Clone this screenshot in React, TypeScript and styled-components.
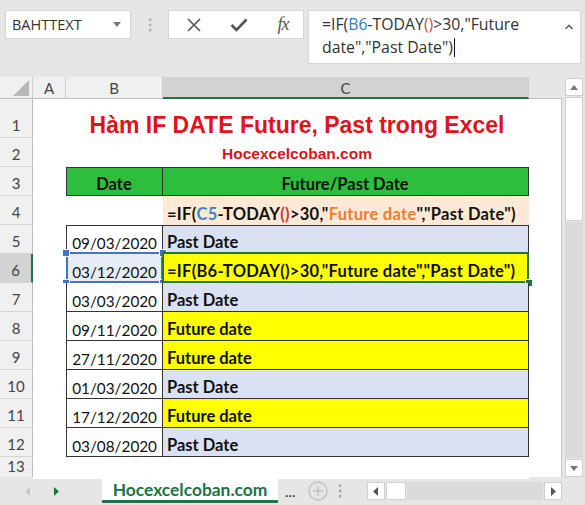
import React from 'react';
import styled, { createGlobalStyle } from 'styled-components';

const Global = createGlobalStyle`
  html, body { margin: 0; padding: 0; }
  body {
    background: #e6e6e6;
    width: 585px;
    height: 505px;
    overflow: hidden;
    font-family: "Lato", "Liberation Sans", sans-serif;
  }
`;

const Window = styled.div`
  width: 585px;
  height: 505px;
  display: flex;
  flex-direction: column;
  background: #e6e6e6;
  overflow: hidden;
`;

/* ---------- formula bar ---------- */
const FormulaArea = styled.div`
  height: 77px;
  box-sizing: border-box;
  padding: 10px 0 0 5px;
  display: flex;
  align-items: flex-start;
`;

const NameBox = styled.div`
  width: 126px;
  height: 29px;
  box-sizing: border-box;
  background: #fff;
  border: 1px solid #d6d6d6;
  display: flex;
  align-items: center;
  justify-content: space-between;
  padding: 0 9px 0 6px;
  font-family: "Open Sans", sans-serif;
  font-size: 14.5px;
  color: #333;
`;

const Grip = styled.div`
  width: 37px;
  height: 29px;
  display: flex;
  align-items: center;
  justify-content: center;
`;

const IconsBox = styled.div`
  width: 136px;
  height: 29px;
  box-sizing: border-box;
  background: #fff;
  border: 1px solid #d6d6d6;
  display: grid;
  grid-template-columns: 46px 44px 44px;
  align-items: center;
  justify-items: center;
  padding-left: 2px;
  margin-right: 4px;
`;

const Fx = styled.span`
  font-family: "Liberation Serif", serif;
  font-style: italic;
  font-size: 18px;
  color: #555;
  letter-spacing: -1px;
`;

const FormulaBox = styled.div`
  width: 273px;
  height: 54px;
  box-sizing: border-box;
  background: #fff;
  border: 1px solid #d6d6d6;
  display: flex;
  justify-content: space-between;
  padding: 2px 6px 0 13px;
  font-family: "Open Sans", sans-serif;
  font-size: 15.8px;
  line-height: 23px;
  color: #333;
`;

const FormulaText = styled.div`
  width: 240px;
  display: flex;
  flex-direction: column;
`;

const FormulaLine = styled.div`
  white-space: nowrap;
`;

const Caret = styled.span`
  display: inline-block;
  width: 1px;
  height: 19px;
  background: #111;
  vertical-align: -4px;
  margin-left: 1px;
`;

const Ref = styled.span<{ $c: string }>`
  color: ${p => p.$c};
`;

/* ---------- sheet ---------- */
const Main = styled.div`
  display: flex;
  height: 400px;
`;

const Sheet = styled.div`
  width: 562px;
  display: flex;
  flex-direction: column;
  background: #fff;
`;

const Row = styled.div<{ $h: number }>`
  display: grid;
  grid-template-columns: 33px 33px 97px 366px 33px;
  height: ${p => p.$h}px;
`;

const ColHead = styled.div<{ $sel?: boolean }>`
  box-sizing: border-box;
  background: ${p => (p.$sel ? '#d3d3d3' : '#f0f0f0')};
  border-right: 1px solid #cdcdcd;
  border-bottom: ${p => (p.$sel ? '2px solid #217346' : '1px solid #bdbdbd')};
  display: flex;
  align-items: center;
  justify-content: center;
  font-size: 15px;
  color: #444;
  padding-top: 1px;
`;

const Corner = styled.div`
  box-sizing: border-box;
  background: #f0f0f0;
  border-right: 1px solid #cdcdcd;
  border-bottom: 1px solid #bdbdbd;
  display: flex;
  align-items: flex-end;
  justify-content: flex-end;
  padding: 0 3px 2px 0;
`;

const EmptyHead = styled.div`
  background: #e6e6e6;
  border-bottom: 1px solid #bdbdbd;
`;

const RowHead = styled.div<{ $sel?: boolean }>`
  box-sizing: border-box;
  background: ${p => (p.$sel ? '#d3d3d3' : '#f0f0f0')};
  border-bottom: 1px solid #d4d4d4;
  border-right: ${p => (p.$sel ? '2px solid #217346' : '1px solid #bdbdbd')};
  display: flex;
  align-items: flex-end;
  justify-content: center;
  padding-bottom: 3px;
  font-size: 15px;
  color: #444;
`;

type CellProps = {
  $bg?: string;
  $boxed?: boolean;
  $top?: boolean;
  $left?: boolean;
  $align?: 'flex-start' | 'flex-end' | 'center';
  $bold?: boolean;
  $formula?: boolean;
  $span?: number;
};

const Cell = styled.div<CellProps>`
  position: relative;
  box-sizing: border-box;
  grid-column: span ${p => p.$span ?? 1};
  background: ${p => p.$bg ?? '#fff'};
  ${p => (p.$boxed ? 'border-right: 1px solid #333; border-bottom: 1px solid #333;' : '')}
  ${p => (p.$top ? 'border-top: 1px solid #333;' : '')}
  ${p => (p.$left ? 'border-left: 1px solid #333;' : '')}
  display: flex;
  align-items: flex-end;
  justify-content: ${p => p.$align ?? 'flex-start'};
  padding: 0 5px 1px 4px;
  font-size: ${p => (p.$bold ? '16.5px' : '15.3px')};
  font-weight: ${p => (p.$bold ? 700 : 400)};
  letter-spacing: ${p => (p.$formula ? '0.28px' : '0')};
  color: #111;
  white-space: nowrap;
`;

const EndCell = styled.div`
  background: #fff;
  border-right: 1px solid #c6c6c6;
`;

const Title = styled.div`
  font-family: "Liberation Sans", sans-serif;
  font-weight: 700;
  font-size: 23px;
  line-height: 1;
  color: #e0121c;
`;

const SubTitle = styled.div`
  font-family: "Liberation Sans", sans-serif;
  font-weight: 700;
  font-size: 15.5px;
  color: #d7141d;
  padding-bottom: 3px;
`;

const SelFrame = styled.div<{ $c: string }>`
  position: absolute;
  left: -1px;
  top: -2px;
  right: -1px;
  bottom: -1px;
  border: 2px solid ${p => p.$c};
  pointer-events: none;
`;

const Handle = styled.div<{ $c: string; $x: 'l' | 'r'; $y: 't' | 'b' }>`
  position: absolute;
  width: 6px;
  height: 6px;
  background: ${p => p.$c};
  border: 1px solid #fff;
  ${p => (p.$x === 'l' ? 'left: -5px;' : 'right: -5px;')}
  ${p => (p.$y === 't' ? 'top: -5px;' : 'bottom: -5px;')}
`;

/* ---------- vertical scrollbar ---------- */
const VScroll = styled.div`
  width: 18px;
  margin-left: 3px;
  padding-top: 1px;
  display: flex;
  flex-direction: column;
  gap: 1px;
`;

const ScrollBtn = styled.div<{ $h?: number; $w?: number }>`
  box-sizing: border-box;
  ${p => (p.$h ? `height: ${p.$h}px;` : '')}
  ${p => (p.$w ? `width: ${p.$w}px;` : '')}
  background: #fff;
  border: 1px solid #cfcfcf;
  display: flex;
  align-items: center;
  justify-content: center;
  flex-shrink: 0;
`;

const Track = styled.div`
  flex: 1;
  background: #dadada;
`;

/* ---------- sheet tabs ---------- */
const TabBar = styled.div`
  height: 28px;
  display: flex;
  align-items: flex-start;
  background: #e6e6e6;
`;

const NavArrows = styled.div`
  width: 102px;
  height: 28px;
  display: flex;
  align-items: center;
  padding-left: 24px;
  box-sizing: border-box;
  gap: 20px;
`;

const Tab = styled.div`
  width: 176px;
  height: 26px;
  box-sizing: border-box;
  background: #fff;
  border-bottom: 3px solid #217346;
  display: flex;
  align-items: center;
  justify-content: center;
  font-weight: 700;
  font-size: 17.4px;
  color: #217346;
  padding-top: 2px;
`;

const More = styled.div`
  width: 30px;
  height: 28px;
  display: flex;
  align-items: center;
  padding-left: 7px;
  box-sizing: border-box;
  font-size: 15px;
  color: #333;
`;

const TabTools = styled.div`
  width: 59px;
  height: 28px;
  display: flex;
  align-items: center;
  gap: 10px;
`;

const HScroll = styled.div`
  margin-top: 5px;
  width: 195px;
  height: 18px;
  display: flex;
  gap: 1px;
`;

const HTrack = styled.div`
  flex: 1;
  background: #dadada;
`;

const Dots = ({ color }: { color: string }) => (
  <svg width="4" height="14" viewBox="0 0 4 14">
    <rect x="1" y="0.5" width="2.4" height="2.4" fill={color} />
    <rect x="1" y="5.8" width="2.4" height="2.4" fill={color} />
    <rect x="1" y="11" width="2.4" height="2.4" fill={color} />
  </svg>
);

const Tri = ({ dir, color, size = 8 }: { dir: 'up' | 'down' | 'left' | 'right'; color: string; size?: number }) => {
  const pts: Record<string, string> = {
    up: '0,7 8,7 4,2',
    down: '0,2 8,2 4,7',
    left: '6,0 6,9 1,4.5',
    right: '2,0 2,9 7,4.5',
  };
  return (
    <svg width={size} height={size + 1} viewBox="0 0 8 9">
      <polygon points={pts[dir]} fill={color} />
    </svg>
  );
};

type Data = { d: string; kind: 'past' | 'future' };
const rows: Data[] = [
  { d: '09/03/2020', kind: 'past' },
  { d: '03/12/2020', kind: 'future' },
  { d: '03/03/2020', kind: 'past' },
  { d: '09/11/2020', kind: 'future' },
  { d: '27/11/2020', kind: 'future' },
  { d: '01/03/2020', kind: 'past' },
  { d: '17/12/2020', kind: 'future' },
  { d: '03/08/2020', kind: 'past' },
];

const BLUE = '#4472c4';
const GREEN = '#217346';

export default function App() {
  return (
    <>
      <Global />
      <Window>
        <FormulaArea>
          <NameBox>
            <span>BAHTTEXT</span>
            <Tri dir="down" color="#777" size={8} />
          </NameBox>
          <Grip>
            <Dots color="#b0b0b0" />
          </Grip>
          <IconsBox>
            <svg width="16" height="16" viewBox="0 0 16 16">
              <path d="M2 2 L14 14 M14 2 L2 14" stroke="#555" strokeWidth="1.6" fill="none" />
            </svg>
            <svg width="18" height="14" viewBox="0 0 18 14">
              <path d="M1.5 7 L6.5 12 L16.5 1.5" stroke="#555" strokeWidth="2.6" fill="none" />
            </svg>
            <Fx>fx</Fx>
          </IconsBox>
          <FormulaBox>
            <FormulaText>
              <FormulaLine>
                =IF(<Ref $c="#3b78c1">B6</Ref>-TODAY<Ref $c="#c0504d">()</Ref>&gt;30,"Future
              </FormulaLine>
              <FormulaLine>
                date","Past Date")
                <Caret />
              </FormulaLine>
            </FormulaText>
            <svg width="10" height="10" viewBox="0 0 10 10" style={{ marginTop: 9 }}>
              <path d="M1.5 7 L5 3.5 L8.5 7" stroke="#666" strokeWidth="1.6" fill="none" />
            </svg>
          </FormulaBox>
        </FormulaArea>

        <Main>
          <Sheet>
            <Row $h={22}>
              <Corner>
                <svg width="16" height="16" viewBox="0 0 16 16">
                  <polygon points="16,0 16,16 0,16" fill="#b8b8b8" />
                </svg>
              </Corner>
              <ColHead>A</ColHead>
              <ColHead>B</ColHead>
              <ColHead $sel>C</ColHead>
              <EmptyHead />
            </Row>

            <Row $h={39}>
              <RowHead>1</RowHead>
              <Cell />
              <Cell $span={2} $align="center">
                <Title>Hàm IF DATE Future, Past trong Excel</Title>
              </Cell>
              <EndCell />
            </Row>

            <Row $h={29}>
              <RowHead>2</RowHead>
              <Cell />
              <Cell $span={2} $align="center">
                <SubTitle>Hocexcelcoban.com</SubTitle>
              </Cell>
              <EndCell />
            </Row>

            <Row $h={29}>
              <RowHead>3</RowHead>
              <Cell />
              <Cell $bg="#2ebd3c" $boxed $top $left $align="center" $bold>Date</Cell>
              <Cell $bg="#2ebd3c" $boxed $top $align="center" $bold>Future/Past Date</Cell>
              <EndCell />
            </Row>

            <Row $h={29}>
              <RowHead>4</RowHead>
              <Cell />
              <Cell />
              <Cell $bg="#fde9d5" $bold $formula>
                =IF(<Ref $c="#3f86c6">C5</Ref>-TODAY<Ref $c="#d0342c">()</Ref>&gt;30,"<Ref $c="#ed7d31">Future date</Ref>","Past Date")
              </Cell>
              <EndCell />
            </Row>

            {rows.map((r, i) => {
              const n = i + 5;
              const sel = n === 6;
              return (
                <Row $h={29} key={n}>
                  <RowHead $sel={sel}>{n}</RowHead>
                  <Cell />
                  <Cell $boxed $left $top={i === 0} $align="flex-end" $bg={sel ? '#e6edf7' : '#fff'}>
                    {r.d}
                    {sel && (
                      <>
                        <SelFrame $c={BLUE} />
                        <Handle $c={BLUE} $x="l" $y="t" />
                        <Handle $c={BLUE} $x="r" $y="t" />
                        <Handle $c={BLUE} $x="l" $y="b" />
                        <Handle $c={BLUE} $x="r" $y="b" />
                      </>
                    )}
                  </Cell>
                  <Cell
                    $boxed
                    $top={i === 0}
                    $bold
                    $formula={sel}
                    $bg={r.kind === 'past' ? '#d9e1f2' : '#ffff00'}
                  >
                    {sel ? '=IF(B6-TODAY()>30,"Future date","Past Date")' : r.kind === 'past' ? 'Past Date' : 'Future date'}
                    {sel && (
                      <>
                        <SelFrame $c={GREEN} />
                        <Handle $c={GREEN} $x="r" $y="b" />
                      </>
                    )}
                  </Cell>
                  <EndCell />
                </Row>
              );
            })}

            <Row $h={20}>
              <RowHead>13</RowHead>
              <Cell />
              <Cell />
              <Cell />
              <EndCell />
            </Row>
          </Sheet>

          <VScroll>
            <ScrollBtn $h={18}>
              <Tri dir="up" color="#777" size={8} />
            </ScrollBtn>
            <ScrollBtn $h={124} />
            <Track />
            <ScrollBtn $h={18}>
              <Tri dir="down" color="#777" size={8} />
            </ScrollBtn>
          </VScroll>
        </Main>

        <TabBar>
          <NavArrows>
            <Tri dir="left" color="#c8c8c8" size={8} />
            <Tri dir="right" color="#217346" size={8} />
          </NavArrows>
          <Tab>Hocexcelcoban.com</Tab>
          <More>...</More>
          <TabTools>
            <svg width="20" height="20" viewBox="0 0 20 20">
              <circle cx="10" cy="10" r="9" stroke="#bdbdbd" strokeWidth="1.3" fill="none" />
              <path d="M10 5 V15 M5 10 H15" stroke="#bdbdbd" strokeWidth="1.3" />
            </svg>
            <Dots color="#a0a0a0" />
          </TabTools>
          <HScroll>
            <ScrollBtn $w={18}>
              <Tri dir="left" color="#555" size={8} />
            </ScrollBtn>
            <ScrollBtn $w={20} />
            <HTrack />
            <ScrollBtn $w={18}>
              <Tri dir="right" color="#555" size={8} />
            </ScrollBtn>
          </HScroll>
        </TabBar>
      </Window>
    </>
  );
}
